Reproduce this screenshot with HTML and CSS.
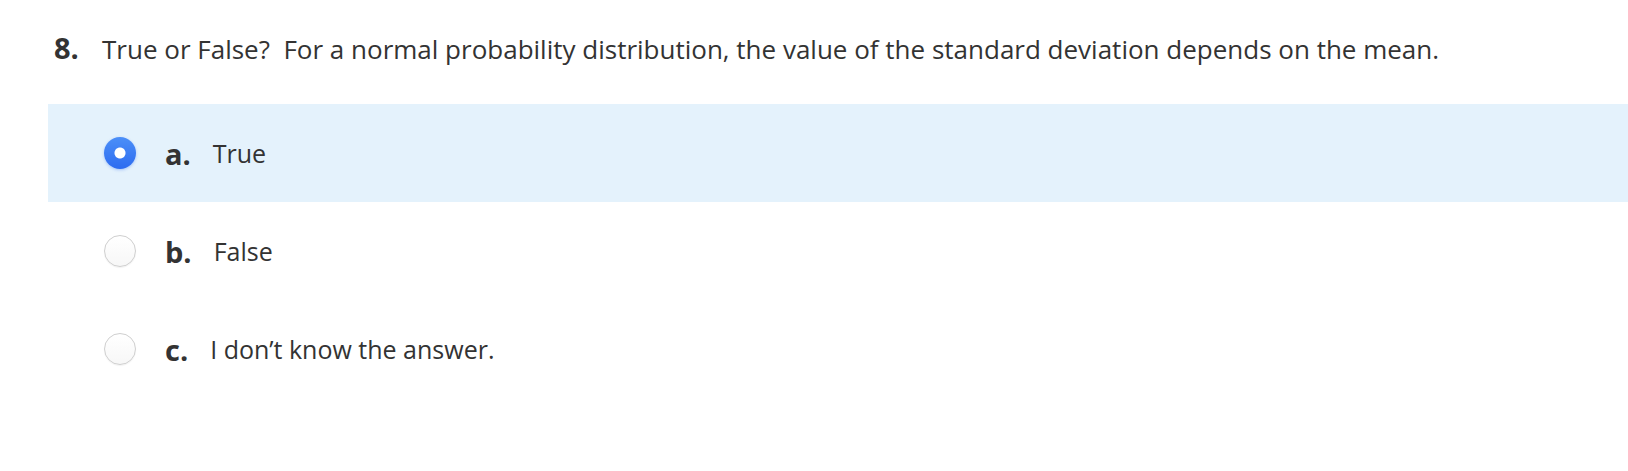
FILE: index.html
```html
<!DOCTYPE html>
<html lang="en">
<head>
  <meta charset="UTF-8">
  <title>Question 8</title>
  <link rel="stylesheet" href="styles.css">
</head>
<body>
  <div class="question">
    <div class="question-title">
      <span class="num">8.</span>
      <span class="prompt">True or False?&nbsp; For a normal probability distribution, the value of the standard deviation depends on the mean.</span>
    </div>
    <div class="options">
      <label class="option selected">
        <span class="radio"></span>
        <span class="letter">a.</span>
        <span class="text">True</span>
      </label>
      <label class="option">
        <span class="radio"></span>
        <span class="letter">b.</span>
        <span class="text">False</span>
      </label>
      <label class="option">
        <span class="radio"></span>
        <span class="letter">c.</span>
        <span class="text">I don’t know the answer.</span>
      </label>
    </div>
  </div>
</body>
</html>
```

FILE: styles.css
```css
body {
  margin: 0;
  background: #fff;
  font-family: 'Open Sans', sans-serif;
  color: #333;
}
.question {
  padding-top: 30px;
}
.question-title {
  display: flex;
  align-items: baseline;
  padding-left: 54px;
  font-size: 26px;
  line-height: 36px;
}
.num {
  font-weight: 700;
  font-size: 29px;
  width: 48px;
}
.options {
  margin-left: 48px;
  margin-top: 37px;
}
.option {
  display: flex;
  align-items: center;
  height: 98px;
  padding-left: 56px;
  font-size: 25px;
}
.option.selected {
  background: #e4f2fc;
}
.radio {
  width: 30px;
  height: 30px;
  border-radius: 50%;
  border: 1px solid #cfcfcf;
  background: linear-gradient(#fff, #f7f7f7);
  box-shadow: 0 1px 1px rgba(0,0,0,0.05);
  margin-right: 29px;
  flex-shrink: 0;
}
.selected .radio {
  width: 32px;
  height: 32px;
  border: none;
  background: radial-gradient(circle, #fff 0 5px, transparent 6px), linear-gradient(#4b8ff8, #2d6cf0);
  box-shadow: 0 1px 3px rgba(45,108,240,0.35);
}
.letter {
  font-weight: 700;
  font-size: 29px;
  margin-right: 22px;
}
```
